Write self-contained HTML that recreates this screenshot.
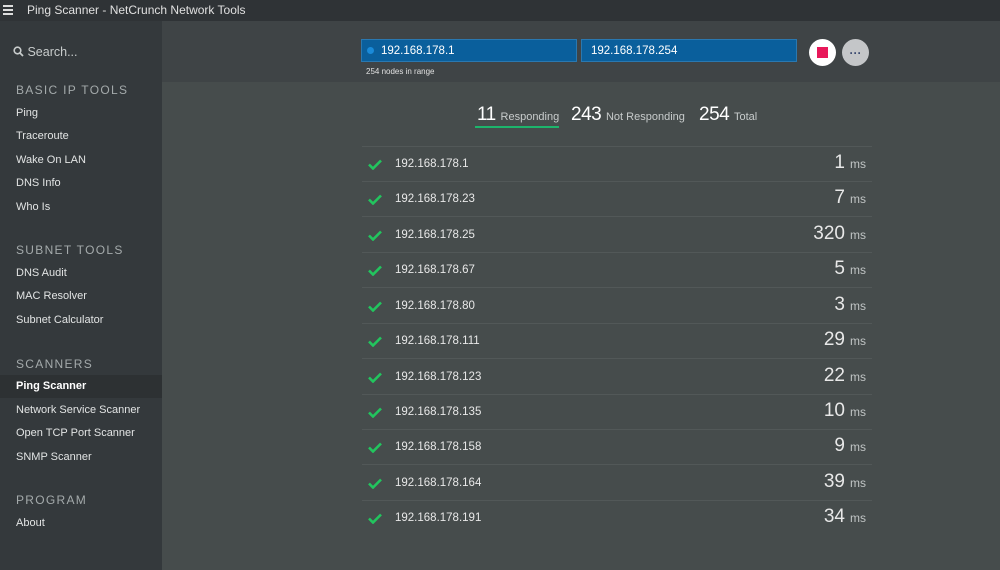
<!DOCTYPE html>
<html><head><style>
*{margin:0;padding:0;box-sizing:border-box}
body{width:1000px;height:570px;overflow:hidden;background:#464c4c;font-family:"Liberation Sans",sans-serif;position:relative}
.title{position:absolute;left:0;top:0;width:1000px;height:21px;background:#2f3336;color:#e0e0e0;font-size:12px;line-height:21px}
.title .t{position:absolute;left:27px}
.ham{position:absolute;left:3px;top:5px;width:10px}
.ham i{display:block;height:2px;background:#ddd;margin-bottom:2px}
.side{position:absolute;left:0;top:21px;width:162px;height:549px;background:#34393c}
.side .s{position:absolute;left:13px;top:24px;color:#c8cccc;font-size:12.5px}
.h{position:absolute;left:16px;color:#a4aaab;font-size:12px;letter-spacing:1.3px}
.it{position:absolute;left:16px;color:#e2e4e4;font-size:11px}
.sel{position:absolute;left:0;width:162px;height:23px;background:#2d3133}
.top{position:absolute;left:162px;top:21px;width:838px;height:61px;background:#3f4446}
.in{position:absolute;top:39px;height:23px;background:#0a5f9c;border:1px solid #2a78b0;color:#fff;font-size:11.5px;line-height:22px;padding-left:19px}
.stat{position:absolute;top:104px;color:#fff;font-size:19px;letter-spacing:-0.5px}
.stat span{font-size:11px;color:#c8cccc;letter-spacing:0}
.row{position:absolute;left:362px;width:510px;height:35px;border-bottom:1px solid #525858;color:#e8e8e8;font-size:11.5px}
.row .ip{position:absolute;left:33px;top:11px}
.row .ms{position:absolute;right:6px;top:5px;font-size:19px}
.row .ms span{font-size:12px;color:#c0c4c4;margin-left:5px}
.row svg{position:absolute;left:6px;top:12px}
</style></head><body>
<div class="title"><div class="ham"><i></i><i></i><i></i></div><span class="t">Ping Scanner - NetCrunch Network Tools</span></div>
<div class="side">
<div class="s"><svg width="11" height="11" viewBox="0 0 11 11" style="vertical-align:-1px"><circle cx="4.5" cy="4.5" r="3.3" stroke="#c8cccc" stroke-width="1.6" fill="none"/><path d="M7 7l3 3" stroke="#c8cccc" stroke-width="1.8"/></svg> Search...</div>
<div class="h" style="top:62px">BASIC IP TOOLS</div>
<div class="it" style="top:86px">Ping</div>
<div class="it" style="top:109px">Traceroute</div>
<div class="it" style="top:133px">Wake On LAN</div>
<div class="it" style="top:156px">DNS Info</div>
<div class="it" style="top:180px">Who Is</div>
<div class="h" style="top:222px">SUBNET TOOLS</div>
<div class="it" style="top:246px">DNS Audit</div>
<div class="it" style="top:269px">MAC Resolver</div>
<div class="it" style="top:293px">Subnet Calculator</div>
<div class="h" style="top:336px">SCANNERS</div>
<div class="sel" style="top:354px"></div>
<div class="it" style="top:359px;font-weight:bold;color:#fff">Ping Scanner</div>
<div class="it" style="top:383px">Network Service Scanner</div>
<div class="it" style="top:406px">Open TCP Port Scanner</div>
<div class="it" style="top:430px">SNMP Scanner</div>
<div class="h" style="top:472px">PROGRAM</div>
<div class="it" style="top:496px">About</div>
</div>
<div class="top"></div>
<div class="in" style="left:361px;width:216px"><span style="position:absolute;left:5px;top:7px;width:7px;height:7px;border-radius:50%;background:#1a8ad8"></span>192.168.178.1</div>
<div class="in" style="left:581px;width:216px;padding-left:9px">192.168.178.254</div>
<div style="position:absolute;left:366px;top:67px;color:#e0e0e0;font-size:8px">254 nodes in range</div>
<div style="position:absolute;left:809px;top:39px;width:27px;height:27px;border-radius:50%;background:#fff"><div style="position:absolute;left:8px;top:8px;width:11px;height:11px;background:#e8185a"></div></div>
<div style="position:absolute;left:842px;top:39px;width:27px;height:27px;border-radius:50%;background:#c4c6c8;color:#3a4a70;font-size:12px;text-align:center;line-height:28px;font-weight:bold">···</div>
<div class="stat" style="left:477px">11 <span>Responding</span></div>
<div style="position:absolute;left:475px;top:126px;width:84px;height:2px;background:#1db56c"></div>
<div class="stat" style="left:571px">243 <span>Not Responding</span></div>
<div class="stat" style="left:699px">254 <span>Total</span></div>
<div style="position:absolute;left:362px;top:146px;width:510px;height:1px;background:#525858"></div>
<div class="row" style="top:147px"><svg width="14" height="11"><path d="M1 5.5l4 4L13 1.5" stroke="#22c55e" stroke-width="2.6" fill="none"/></svg><span class="ip">192.168.178.1</span><span class="ms">1<span>ms</span></span></div>
<div class="row" style="top:182px"><svg width="14" height="11"><path d="M1 5.5l4 4L13 1.5" stroke="#22c55e" stroke-width="2.6" fill="none"/></svg><span class="ip">192.168.178.23</span><span class="ms">7<span>ms</span></span></div>
<div class="row" style="top:218px"><svg width="14" height="11"><path d="M1 5.5l4 4L13 1.5" stroke="#22c55e" stroke-width="2.6" fill="none"/></svg><span class="ip">192.168.178.25</span><span class="ms">320<span>ms</span></span></div>
<div class="row" style="top:253px"><svg width="14" height="11"><path d="M1 5.5l4 4L13 1.5" stroke="#22c55e" stroke-width="2.6" fill="none"/></svg><span class="ip">192.168.178.67</span><span class="ms">5<span>ms</span></span></div>
<div class="row" style="top:289px"><svg width="14" height="11"><path d="M1 5.5l4 4L13 1.5" stroke="#22c55e" stroke-width="2.6" fill="none"/></svg><span class="ip">192.168.178.80</span><span class="ms">3<span>ms</span></span></div>
<div class="row" style="top:324px"><svg width="14" height="11"><path d="M1 5.5l4 4L13 1.5" stroke="#22c55e" stroke-width="2.6" fill="none"/></svg><span class="ip">192.168.178.111</span><span class="ms">29<span>ms</span></span></div>
<div class="row" style="top:360px"><svg width="14" height="11"><path d="M1 5.5l4 4L13 1.5" stroke="#22c55e" stroke-width="2.6" fill="none"/></svg><span class="ip">192.168.178.123</span><span class="ms">22<span>ms</span></span></div>
<div class="row" style="top:395px"><svg width="14" height="11"><path d="M1 5.5l4 4L13 1.5" stroke="#22c55e" stroke-width="2.6" fill="none"/></svg><span class="ip">192.168.178.135</span><span class="ms">10<span>ms</span></span></div>
<div class="row" style="top:430px"><svg width="14" height="11"><path d="M1 5.5l4 4L13 1.5" stroke="#22c55e" stroke-width="2.6" fill="none"/></svg><span class="ip">192.168.178.158</span><span class="ms">9<span>ms</span></span></div>
<div class="row" style="top:466px"><svg width="14" height="11"><path d="M1 5.5l4 4L13 1.5" stroke="#22c55e" stroke-width="2.6" fill="none"/></svg><span class="ip">192.168.178.164</span><span class="ms">39<span>ms</span></span></div>
<div class="row" style="top:501px;border-bottom:none"><svg width="14" height="11"><path d="M1 5.5l4 4L13 1.5" stroke="#22c55e" stroke-width="2.6" fill="none"/></svg><span class="ip">192.168.178.191</span><span class="ms">34<span>ms</span></span></div>
</body></html>
